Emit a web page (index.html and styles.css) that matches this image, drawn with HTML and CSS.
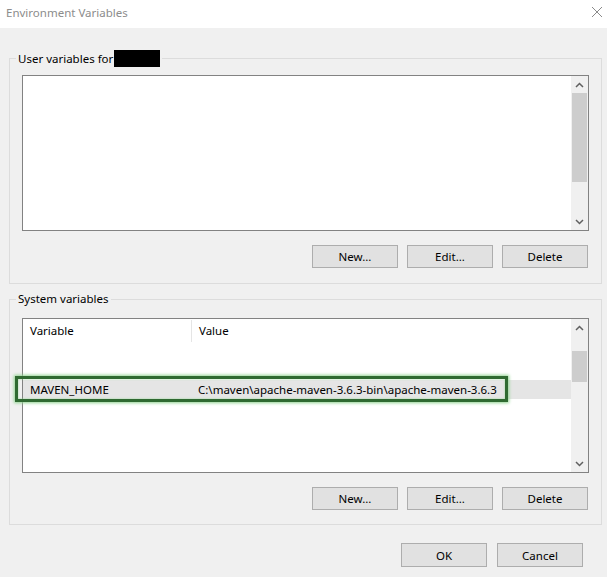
FILE: index.html
```html
<!DOCTYPE html>
<html>
<head>
<meta charset="utf-8">
<title>Environment Variables</title>
<link rel="stylesheet" href="styles.css">
</head>
<body>
<div class="window">
  <div class="titlebar">
    <span class="title">Environment Variables</span>
    <svg class="close" width="12" height="12" viewBox="0 0 12 12"><path d="M1 1 L11 11 M11 1 L1 11" stroke="#8a8a8a" stroke-width="1" fill="none"/></svg>
  </div>
  <div class="content">
    <fieldset class="group group-user">
      <legend>User variables for <span class="redact"></span></legend>
      <div class="list list-user">
        <div class="list-area"></div>
        <div class="scrollbar">
          <div class="arrow"><svg width="9" height="6" viewBox="0 0 9 6"><path d="M1 5 L4.5 1.5 L8 5" stroke="#606060" stroke-width="1.5" fill="none"/></svg></div>
          <div class="track"><div class="thumb thumb-user"></div></div>
          <div class="arrow"><svg width="9" height="6" viewBox="0 0 9 6"><path d="M1 1 L4.5 4.5 L8 1" stroke="#606060" stroke-width="1.5" fill="none"/></svg></div>
        </div>
      </div>
      <div class="btn-row">
        <button class="btn">New...</button>
        <button class="btn">Edit...</button>
        <button class="btn">Delete</button>
      </div>
    </fieldset>

    <fieldset class="group group-sys">
      <legend>System variables</legend>
      <div class="list list-sys">
        <div class="list-area">
          <div class="header">
            <div class="col col-var">Variable</div>
            <div class="col col-val">Value</div>
          </div>
          <div class="row"></div>
          <div class="row"></div>
          <div class="row selected">
            <div class="col col-var">MAVEN_HOME</div>
            <div class="col col-val">C:\maven\apache-maven-3.6.3-bin\apache-maven-3.6.3</div>
          </div>
        </div>
        <div class="scrollbar">
          <div class="arrow"><svg width="9" height="6" viewBox="0 0 9 6"><path d="M1 5 L4.5 1.5 L8 5" stroke="#606060" stroke-width="1.5" fill="none"/></svg></div>
          <div class="track"><div class="thumb thumb-sys"></div></div>
          <div class="arrow"><svg width="9" height="6" viewBox="0 0 9 6"><path d="M1 1 L4.5 4.5 L8 1" stroke="#606060" stroke-width="1.5" fill="none"/></svg></div>
        </div>
        <div class="highlight"></div>
      </div>
      <div class="btn-row">
        <button class="btn">New...</button>
        <button class="btn">Edit...</button>
        <button class="btn">Delete</button>
      </div>
    </fieldset>

    <div class="dialog-buttons">
      <button class="btn btn-ok">OK</button>
      <button class="btn btn-ok">Cancel</button>
    </div>
  </div>
</div>
</body>
</html>
```

FILE: styles.css
```css
html, body {
  margin: 0;
  padding: 0;
  background: #f0f0f0;
}
body {
  font-family: "Noto Sans", "Open Sans", sans-serif;
  font-size: 11.5px;
  color: #000;
}
.window {
  width: 607px;
  height: 577px;
  overflow: hidden;
}
.titlebar {
  height: 28px;
  background: #fff;
  display: flex;
  align-items: center;
  justify-content: space-between;
  padding: 0 4px 0 6px;
  box-sizing: border-box;
}
.title {
  color: #8c8c8c;
  line-height: 16px;
  margin-top: -3px;
}
.close {
  margin-top: -4px;
}
.content {
  padding-top: 22px;
}
.group {
  margin: 0 0 0 9px;
  width: 593px;
  box-sizing: border-box;
  border: 1px solid #dcdcdc;
  padding: 0 12px 15px 12px;
}
.group legend {
  margin-left: -6px;
  padding: 0 2px;
  line-height: 16px;
  display: flex;
  align-items: center;
  gap: 1px;
}
.redact {
  display: inline-block;
  width: 46px;
  height: 17px;
  background: #000;
}
.group-sys {
  margin-top: 7px;
  padding-bottom: 14px;
}
.list {
  position: relative;
  display: flex;
  background: #fff;
  border: 1px solid #828282;
  box-sizing: border-box;
}
.list-user {
  margin-top: 8px;
  height: 156px;
}
.list-sys {
  margin-top: 11px;
  height: 155px;
}
.list-area {
  flex: 1;
}
.scrollbar {
  width: 17px;
  display: flex;
  flex-direction: column;
  background: #f0f0f0;
}
.arrow {
  height: 17px;
  display: flex;
  align-items: center;
  justify-content: center;
}
.track {
  flex: 1;
  display: flex;
  flex-direction: column;
  padding: 0 1px;
}
.thumb {
  background: #cdcdcd;
}
.thumb-user {
  height: 89px;
}
.thumb-sys {
  margin-top: 15px;
  height: 31px;
}
.header {
  display: flex;
  height: 23px;
  align-items: center;
}
.header .col-val {
  border-left: 1px solid #e5e5e5;
  height: 22px;
  display: flex;
  align-items: center;
}
.col {
  box-sizing: border-box;
}
.col-var {
  width: 168px;
  padding-left: 7px;
}
.col-val {
  padding-left: 7px;
  white-space: nowrap;
}
.row {
  height: 19px;
  display: flex;
  align-items: center;
}
.row.selected {
  background: #e5e5e5;
}
.highlight {
  position: absolute;
  left: -8px;
  top: 57px;
  width: 493px;
  height: 26px;
  box-sizing: border-box;
  border: 3px solid #2f6a31;
  box-shadow: 0 0 3px 1px #8fd38f, inset 0 0 2px #8fd38f;
  pointer-events: none;
}
.btn-row {
  display: flex;
  justify-content: flex-end;
  gap: 9px;
  margin-top: 14px;
  padding-right: 1px;
}
.btn {
  width: 86px;
  height: 23px;
  box-sizing: border-box;
  background: #e1e1e1;
  border: 1px solid #adadad;
  font-family: "Noto Sans", "Open Sans", sans-serif;
  font-size: 11.5px;
  color: #000;
  padding: 0;
  margin: 0;
}
.dialog-buttons {
  display: flex;
  justify-content: flex-end;
  gap: 10px;
  margin-top: 18px;
  padding-right: 24px;
}
.btn-ok {
  width: 86px;
  height: 24px;
}
```
